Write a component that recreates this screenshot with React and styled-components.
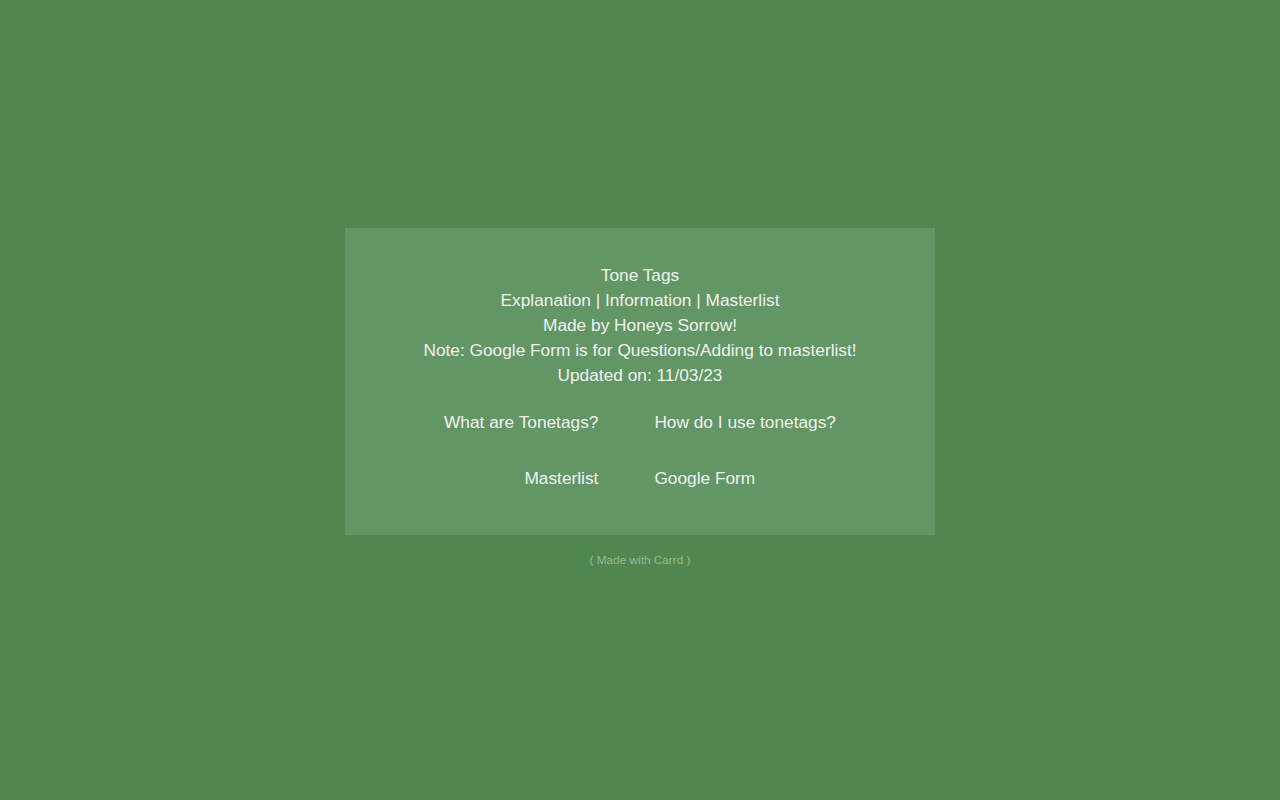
import React from "react";
import styled, { createGlobalStyle } from "styled-components";

const GlobalStyle = createGlobalStyle`
  html, body {
    margin: 0;
    padding: 0;
    background: #508751;
  }
  body {
    font-family: "Liberation Sans", Arial, sans-serif;
  }
`;

const Page = styled.div`
  min-height: 100vh;
  display: flex;
  flex-direction: column;
  align-items: center;
  justify-content: center;
`;

const Card = styled.div`
  width: 590px;
  box-sizing: border-box;
  background: #629665;
  padding: 35px 0 36px;
  display: flex;
  flex-direction: column;
  align-items: center;
`;

const Text = styled.p`
  margin: 0;
  color: #f0f2ef;
  font-size: 17.3px;
  line-height: 25px;
  text-align: center;
`;

const Buttons = styled.div`
  margin-top: 15px;
  display: grid;
  grid-template-columns: auto auto;
  grid-auto-rows: 40px;
  column-gap: 56px;
  row-gap: 16px;
`;

const Button = styled.a`
  display: flex;
  align-items: center;
  justify-content: ${(p) => (p.$side === "left" ? "flex-end" : "flex-start")};
  color: #f0f2ef;
  font-size: 17.3px;
  text-decoration: none;
  cursor: pointer;
`;

const Footer = styled.div`
  margin-top: 18px;
  padding-bottom: 6px;
  font-size: 11.8px;
  line-height: 14px;
  color: #96b995;
`;

const lines = [
  "Tone Tags",
  "Explanation | Information | Masterlist",
  "Made by Honeys Sorrow!",
  "Note: Google Form is for Questions/Adding to masterlist!",
  "Updated on: 11/03/23",
];

const buttons = [
  ["What are Tonetags?", "How do I use tonetags?"],
  ["Masterlist", "Google Form"],
];

export default function App() {
  return (
    <>
      <GlobalStyle />
      <Page>
        <Card>
          {lines.map((line) => (
            <Text key={line}>{line}</Text>
          ))}
          <Buttons>
            {buttons.map(([left, right]) => (
              <React.Fragment key={left}>
                <Button $side="left">{left}</Button>
                <Button $side="right">{right}</Button>
              </React.Fragment>
            ))}
          </Buttons>
        </Card>
        <Footer>( Made with Carrd )</Footer>
      </Page>
    </>
  );
}
